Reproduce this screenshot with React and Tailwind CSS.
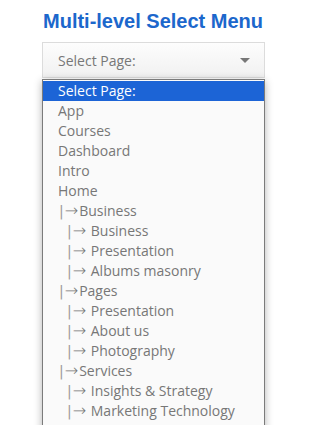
import React from 'react';

const options = [
  { label: 'Select Page:', selected: true },
  { label: 'App' },
  { label: 'Courses' },
  { label: 'Dashboard' },
  { label: 'Intro' },
  { label: 'Home' },
  { label: 'Business', level: 1 },
  { label: 'Business', level: 2 },
  { label: 'Presentation', level: 2 },
  { label: 'Albums masonry', level: 2 },
  { label: 'Pages', level: 1 },
  { label: 'Presentation', level: 2 },
  { label: 'About us', level: 2 },
  { label: 'Photography', level: 2 },
  { label: 'Services', level: 1 },
  { label: 'Insights & Strategy', level: 2 },
  { label: 'Marketing Technology', level: 2 },
];

function Prefix({ level }) {
  if (!level) return null;
  return (
    <>
      <span className="font-['DejaVu_Sans',sans-serif] text-[#999]">|</span>
      <span className="ml-[1px] mr-[1px] font-['DejaVu_Sans',sans-serif] text-[16px] font-extralight">→</span>
      {level === 2 && ' '}
    </>
  );
}

export default function App() {
  return (
    <div className="h-[425px] w-[327px] overflow-hidden bg-white">
      <div className="pl-[43px] pt-[9px]">
        <h1 className="font-['Liberation_Sans',Arial,sans-serif] text-[20px] font-bold leading-[24px] text-[#1c67cc]">
          Multi-level Select Menu
        </h1>

        {/* select box */}
        <div className="ml-[-1px] mt-[9px] w-[223px] font-['Open_Sans',sans-serif]">
          <div className="flex h-[36px] items-center justify-between border border-[#dcdcdc] bg-gradient-to-b from-[#fdfdfd] to-[#f1f1f1] pl-[15px] pr-[14px] text-[14px] text-[#777]">
            <span>Select Page:</span>
            <span className="h-0 w-0 border-x-[5px] border-t-[5px] border-x-transparent border-t-[#777]" />
          </div>

          {/* dropdown list */}
          <div className="mt-[1px] border border-[#7a7a7a] bg-[#fafafa] pb-[20px] pt-[1px] opacity-99 shadow-[0_2px_8px_rgba(0,0,0,0.3)]">
            {options.map((opt, i) => (
              <div
                key={i}
                className={`h-[20px] whitespace-pre text-[14px] leading-[20px] ${
                  opt.selected ? 'bg-[#1a63d6] text-white' : 'text-[#767676]'
                } ${opt.level === 2 ? 'pl-[24px]' : opt.level === 1 ? 'pl-[16px]' : 'pl-[15px]'}`}
              >
                <Prefix level={opt.level} />
                {opt.label}
              </div>
            ))}
          </div>
        </div>
      </div>
    </div>
  );
}
